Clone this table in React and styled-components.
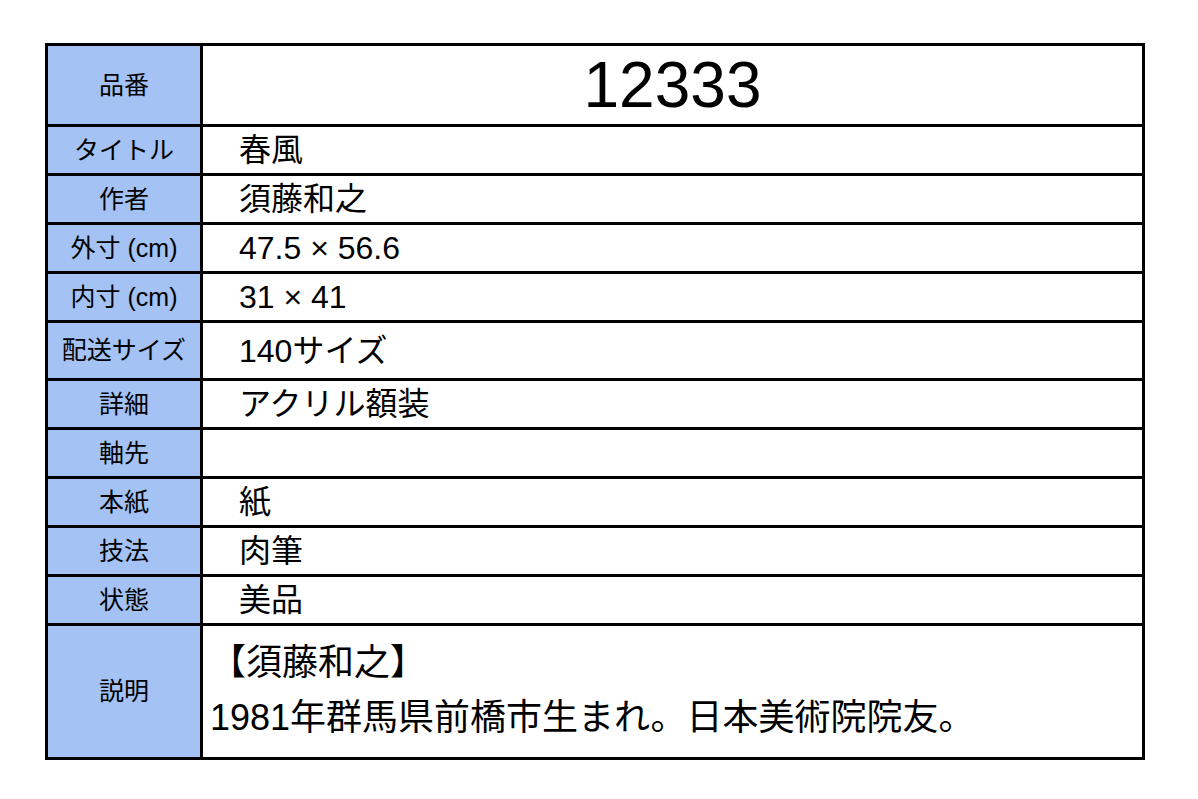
import React from "react";
import styled, { createGlobalStyle } from "styled-components";

const GlobalStyle = createGlobalStyle`
  html, body {
    margin: 0;
    padding: 0;
    background: #ffffff;
  }
  body {
    font-family: "Liberation Sans", "Noto Sans CJK JP", sans-serif;
    color: #000000;
  }
`;

const Page = styled.div`
  padding: 43px 0 0 45px;
`;

const Sheet = styled.div`
  width: 1094px;
  border: 3px solid #000;
  display: flex;
  flex-direction: column;
`;

const Row = styled.div`
  display: flex;
  height: ${(p) => p.$h}px;
  & + & {
    border-top: 3px solid #000;
  }
`;

const Label = styled.div`
  flex: none;
  width: 152px;
  background: #a4c2f4;
  border-right: 3px solid #000;
  display: flex;
  align-items: center;
  justify-content: center;
  font-size: 25px;
  line-height: 1;
  white-space: nowrap;
`;

const Value = styled.div`
  flex: 1;
  min-width: 0;
  display: flex;
  align-items: center;
  justify-content: ${(p) => (p.$center ? "center" : "flex-start")};
  padding-left: ${(p) => (p.$center ? 0 : 36)}px;
  font-size: ${(p) => (p.$big ? 64 : 32)}px;
  line-height: 1;
  white-space: nowrap;
`;

const Notes = styled.div`
  flex: 1;
  display: flex;
  flex-direction: column;
  justify-content: center;
  padding-left: 7px;
  padding-bottom: 4px;
  font-size: 36px;
  line-height: 55px;
  white-space: nowrap;
`;

const rows = [
  { label: "タイトル", value: "春風" },
  { label: "作者", value: "須藤和之" },
  { label: "外寸 (cm)", value: "47.5 × 56.6" },
  { label: "内寸 (cm)", value: "31 × 41" },
  { label: "配送サイズ", value: "140サイズ", h: 55 },
  { label: "詳細", value: "アクリル額装" },
  { label: "軸先", value: "" },
  { label: "本紙", value: "紙" },
  { label: "技法", value: "肉筆" },
  { label: "状態", value: "美品" },
];

export default function App() {
  return (
    <>
      <GlobalStyle />
      <Page>
        <Sheet>
          <Row $h={78}>
            <Label>品番</Label>
            <Value $center $big>12333</Value>
          </Row>
          {rows.map((r) => (
            <Row key={r.label} $h={r.h || 46}>
              <Label>{r.label}</Label>
              <Value>{r.value}</Value>
            </Row>
          ))}
          <Row $h={131}>
            <Label>説明</Label>
            <Notes>
              <div>【須藤和之】</div>
              <div>1981年群馬県前橋市生まれ。日本美術院院友。</div>
            </Notes>
          </Row>
        </Sheet>
      </Page>
    </>
  );
}
